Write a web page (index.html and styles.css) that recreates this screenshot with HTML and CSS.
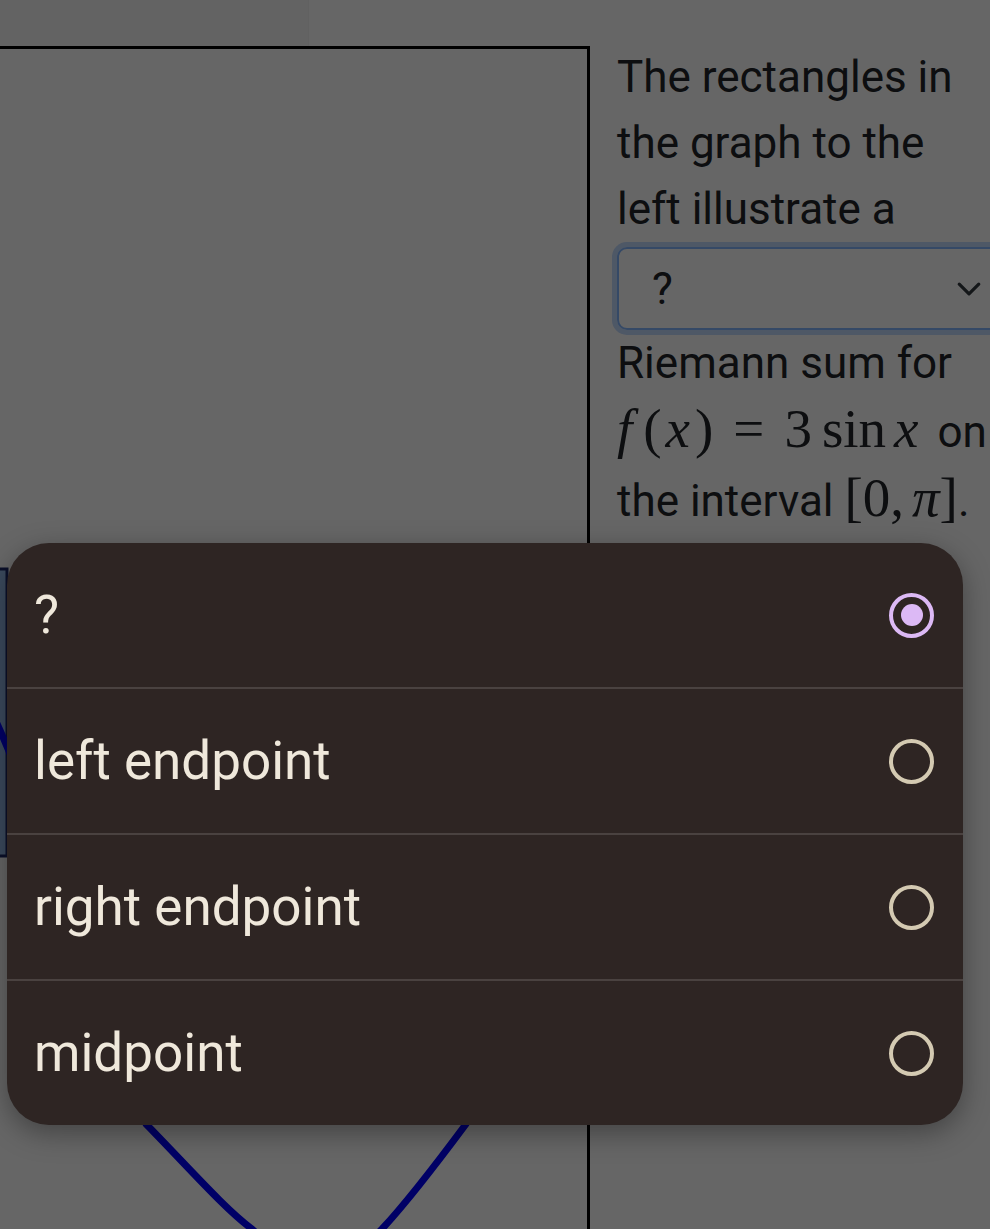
FILE: index.html
```html
<!DOCTYPE html>
<html lang="en">
<head>
    <meta charset="UTF-8">
    <meta name="viewport" content="width=device-width, initial-scale=1.0">
    <title>Riemann Sums</title>
    <link rel="stylesheet" href="styles.css">
</head>
<body>
    <div class="topbar">
        <div class="topbar-left"></div>
    </div>

    <div class="problem">
        <div class="graph">
            <svg class="graph-svg" viewBox="0 0 587 1250" width="587" height="1250">
                <rect x="-20" y="520" width="27" height="287" fill="#93b9e8" stroke="#1c2a6a" stroke-width="3"/>
                <path d="M -10 660 C 40 760, 100 980, 146 1075 C 190 1120, 225 1160, 252 1180 C 285 1210, 300 1235, 318 1240 C 336 1235, 352 1210, 382 1180 C 410 1150, 440 1110, 466 1075 C 520 960, 560 860, 600 760" fill="none" stroke="#0000ff" stroke-width="7"/>
            </svg>
        </div>

        <div class="question">
            <p class="text">The rectangles in the graph to the left illustrate a</p>
            <div class="select">
                <span class="select-value">?</span>
                <svg class="chevron" viewBox="0 0 16 16" width="26" height="26">
                    <path d="M2 5l6 6 6-6" fill="none" stroke="#343a40" stroke-width="2" stroke-linecap="round" stroke-linejoin="round"/>
                </svg>
            </div>
            <p class="text">Riemann sum for
                <span class="math"><i class="f">f</i>(<i class="x">x</i>)<span class="op">=</span>3<span class="fn">sin</span><i class="last">x</i></span> on
                the interval <span class="math">[0,<span class="pi"><i>π</i></span>]</span>.</p>
        </div>
    </div>

    <div class="scrim"></div>

    <ul class="menu">
        <li class="menu-item">
            <span>?</span>
            <span class="radio checked"></span>
        </li>
        <li class="menu-item">
            <span>left endpoint</span>
            <span class="radio"></span>
        </li>
        <li class="menu-item">
            <span>right endpoint</span>
            <span class="radio"></span>
        </li>
        <li class="menu-item">
            <span>midpoint</span>
            <span class="radio"></span>
        </li>
    </ul>
</body>
</html>
```

FILE: styles.css
```css
/* Base */
body {
    font-family: 'Roboto', sans-serif;
    background-color: #fff;
    color: #212529;
    margin: 0;
    padding: 0;
    width: 990px;
    height: 1229px;
    overflow: hidden;
}

.topbar {
    height: 46px;
}

.topbar-left {
    width: 308px;
    height: 100%;
    background-color: #f8f8f8;
    border-right: 1px solid #f2f2f2;
}

.problem {
    display: flex;
    align-items: flex-start;
}

.graph {
    width: 587px;
    height: 1250px;
    flex-shrink: 0;
    border-top: 3px solid #000;
    border-right: 3px solid #000;
    overflow: hidden;
}

.graph-svg {
    display: block;
}

.question {
    width: 372px;
    flex-shrink: 0;
    padding-left: 27px;
    margin-top: -2px;
}

.text {
    margin: 0;
    font-size: 44px;
    line-height: 66px;
}

.select {
    margin-top: 5px;
    margin-right: -100px;
    width: 383px;
    height: 83px;
    box-sizing: border-box;
    border: 2px solid #86b7fe;
    border-radius: 10px;
    box-shadow: 0 0 0 5px rgba(13, 110, 253, 0.25);
    display: flex;
    align-items: center;
    justify-content: space-between;
    padding: 0 16px 0 33px;
    font-size: 44px;
}

.chevron {
    display: block;
}

/* Math */
.math {
    font-family: 'Liberation Serif', 'DejaVu Serif', serif;
    font-size: 55px;
}

.math i {
    font-style: italic;
}

.math .f {
    margin-right: 11px;
}

.math .x {
    margin: 0 5px 0 4px;
}

.math .op {
    margin: 0 20px;
}

.math .fn {
    margin: 0 8px 0 10px;
}

.math .last {
    margin-right: 8px;
}

.math .pi {
    margin-left: 8px;
}

/* Dropdown overlay */
.scrim {
    position: fixed;
    top: 0;
    left: 0;
    right: 0;
    bottom: 0;
    background-color: rgba(0, 0, 0, 0.6);
}

.menu {
    position: absolute;
    top: 543px;
    left: 7px;
    width: 956px;
    margin: 0;
    padding: 0;
    list-style: none;
    background-color: #2e2523;
    border-radius: 42px;
    overflow: hidden;
    box-shadow: 0 8px 28px rgba(0, 0, 0, 0.35);
}

.menu-item {
    height: 144px;
    display: flex;
    align-items: center;
    justify-content: space-between;
    padding: 0 29px 0 27px;
    font-size: 53px;
    color: #efe8db;
}

.menu-item + .menu-item {
    border-top: 2px solid #4a4240;
}

.radio {
    width: 37px;
    height: 37px;
    border: 4px solid #d4cab2;
    border-radius: 50%;
    display: flex;
    align-items: center;
    justify-content: center;
}

.radio.checked {
    border-color: #dcb9f5;
}

.radio.checked::after {
    content: '';
    width: 22px;
    height: 22px;
    border-radius: 50%;
    background-color: #dcb9f5;
}
```
